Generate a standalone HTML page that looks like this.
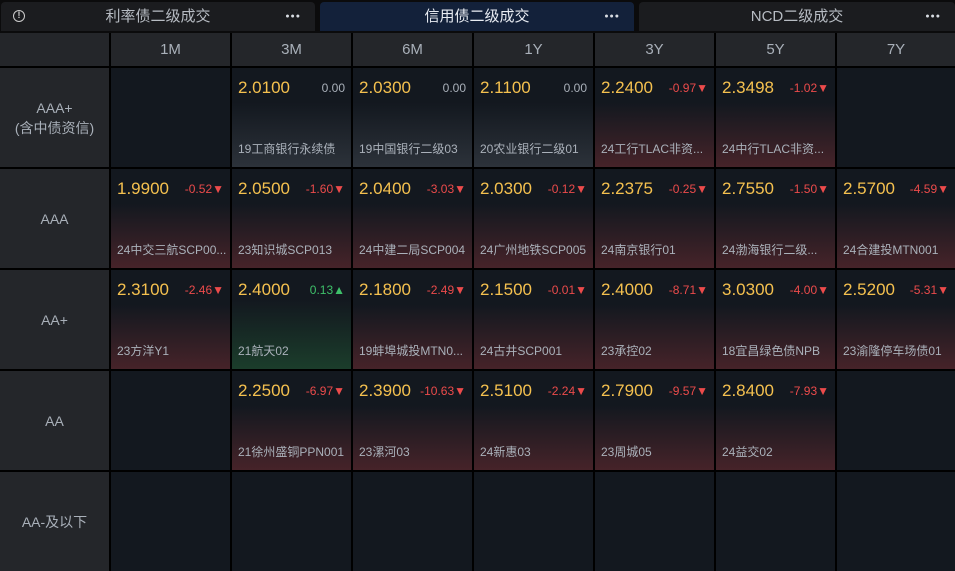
<!DOCTYPE html>
<html><head><meta charset="utf-8"><style>
*{margin:0;padding:0;box-sizing:border-box}
body{width:955px;height:571px;background:#000;overflow:hidden;font-family:"Liberation Sans","Noto Sans CJK SC",sans-serif}
.tabs{position:relative;height:33px;background:#0b0b0c}
.tab{position:absolute;top:2px;height:29px;background:#1b1c1f;border-radius:4px 4px 0 0;color:#b7bcc3;font-size:15px;text-align:center;line-height:29px}
.tab.act{background:#13213a;color:#e8ecf2}
.dots{position:absolute;right:14px;top:0;color:#d8dce2;font-size:7px;letter-spacing:1px}
.info{position:absolute;left:12px;top:8px;width:12px;height:12px;border:1.5px solid #ccc;border-radius:50%;font-size:9px;line-height:9px;color:#ccc;font-weight:bold}
.grid{display:grid;grid-template-columns:109px repeat(6,119px) 118px;grid-template-rows:33px repeat(5,99px);gap:2px;background:#000}
.h{background:#24262a;color:#a9b0b9;font-size:15px;text-align:center;line-height:33px}
.l{background:#24262a;color:#a9b0b9;font-size:14px;display:flex;align-items:center;justify-content:center;text-align:center;line-height:20px}
.c{background:#13181f;position:relative}
.g{background:linear-gradient(#13181f 35%,#2c323a)}
.r{background:linear-gradient(#13181f 35%,#462329)}
.gr{background:linear-gradient(#13181f 30%,#1b3d2b)}
.v{position:absolute;left:6px;top:10px;color:#f5c14f;font-size:17px}
.d{position:absolute;right:6px;top:13px;font-size:12px;color:#ec4b4b}
.g .d{color:#a9b0b9}
.gr .d{color:#3ec06a}
.n{position:absolute;left:6px;top:72px;font-size:12px;color:#aab1ba;white-space:nowrap}
</style></head><body>
<div class="tabs">
<div class="tab" style="left:1px;width:314px"><span class="info">!</span>利率债二级成交<span class="dots">●●●</span></div>
<div class="tab act" style="left:320px;width:314px">信用债二级成交<span class="dots">●●●</span></div>
<div class="tab" style="left:639px;width:316px">NCD二级成交<span class="dots">●●●</span></div>
</div>
<div class="grid">
<div class="h"></div><div class="h">1M</div><div class="h">3M</div><div class="h">6M</div><div class="h">1Y</div><div class="h">3Y</div><div class="h">5Y</div><div class="h">7Y</div>

<div class="l">AAA+<br>(含中债资信)</div>
<div class="c"></div>
<div class="c g"><span class="v">2.0100</span><span class="d">0.00</span><span class="n">19工商银行永续债</span></div>
<div class="c g"><span class="v">2.0300</span><span class="d">0.00</span><span class="n">19中国银行二级03</span></div>
<div class="c g"><span class="v">2.1100</span><span class="d">0.00</span><span class="n">20农业银行二级01</span></div>
<div class="c r"><span class="v">2.2400</span><span class="d">-0.97▼</span><span class="n">24工行TLAC非资...</span></div>
<div class="c r"><span class="v">2.3498</span><span class="d">-1.02▼</span><span class="n">24中行TLAC非资...</span></div>
<div class="c"></div>

<div class="l">AAA</div>
<div class="c r"><span class="v">1.9900</span><span class="d">-0.52▼</span><span class="n">24中交三航SCP00...</span></div>
<div class="c r"><span class="v">2.0500</span><span class="d">-1.60▼</span><span class="n">23知识城SCP013</span></div>
<div class="c r"><span class="v">2.0400</span><span class="d">-3.03▼</span><span class="n">24中建二局SCP004</span></div>
<div class="c r"><span class="v">2.0300</span><span class="d">-0.12▼</span><span class="n">24广州地铁SCP005</span></div>
<div class="c r"><span class="v">2.2375</span><span class="d">-0.25▼</span><span class="n">24南京银行01</span></div>
<div class="c r"><span class="v">2.7550</span><span class="d">-1.50▼</span><span class="n">24渤海银行二级...</span></div>
<div class="c r"><span class="v">2.5700</span><span class="d">-4.59▼</span><span class="n">24合建投MTN001</span></div>

<div class="l">AA+</div>
<div class="c r"><span class="v">2.3100</span><span class="d">-2.46▼</span><span class="n">23方洋Y1</span></div>
<div class="c gr"><span class="v">2.4000</span><span class="d">0.13▲</span><span class="n">21航天02</span></div>
<div class="c r"><span class="v">2.1800</span><span class="d">-2.49▼</span><span class="n">19蚌埠城投MTN0...</span></div>
<div class="c r"><span class="v">2.1500</span><span class="d">-0.01▼</span><span class="n">24古井SCP001</span></div>
<div class="c r"><span class="v">2.4000</span><span class="d">-8.71▼</span><span class="n">23承控02</span></div>
<div class="c r"><span class="v">3.0300</span><span class="d">-4.00▼</span><span class="n">18宜昌绿色债NPB</span></div>
<div class="c r"><span class="v">2.5200</span><span class="d">-5.31▼</span><span class="n">23渝隆停车场债01</span></div>

<div class="l">AA</div>
<div class="c"></div>
<div class="c r"><span class="v">2.2500</span><span class="d">-6.97▼</span><span class="n">21徐州盛铜PPN001</span></div>
<div class="c r"><span class="v">2.3900</span><span class="d">-10.63▼</span><span class="n">23漯河03</span></div>
<div class="c r"><span class="v">2.5100</span><span class="d">-2.24▼</span><span class="n">24新惠03</span></div>
<div class="c r"><span class="v">2.7900</span><span class="d">-9.57▼</span><span class="n">23周城05</span></div>
<div class="c r"><span class="v">2.8400</span><span class="d">-7.93▼</span><span class="n">24益交02</span></div>
<div class="c"></div>

<div class="l">AA-及以下</div>
<div class="c"></div><div class="c"></div><div class="c"></div><div class="c"></div><div class="c"></div><div class="c"></div><div class="c"></div>
</div>
</body></html>
